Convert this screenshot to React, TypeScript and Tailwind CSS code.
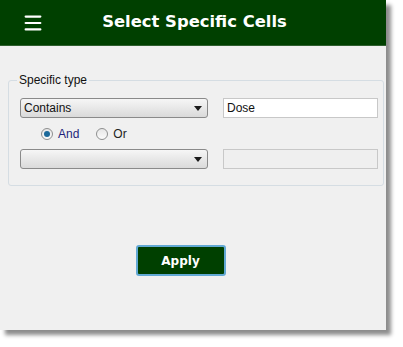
import { Menu } from 'lucide-react';

const Caret = () => (
  <svg width="8" height="5" viewBox="0 0 8 5" className="shrink-0">
    <path d="M0 0 H8 L4 5 Z" fill="#1a1a1a" />
  </svg>
);

const Select = ({ value = '' }: { value?: string }) => (
  <div className="flex h-[20px] w-[188px] items-center justify-between rounded-[3px] border border-[#8a8a8a] bg-gradient-to-b from-[#f6f6f6] to-[#dadada] pl-[3px] pr-[5px] text-[12px] text-[#111]">
    <span>{value}</span>
    <Caret />
  </div>
);

const Radio = ({ checked, label }: { checked?: boolean; label: string }) => (
  <label className="flex items-center gap-[5px]">
    <span className="flex h-[12px] w-[12px] items-center justify-center rounded-full border border-[#8e8f8f] bg-gradient-to-b from-[#e6e6e6] to-[#fbfbfb]">
      {checked && <span className="h-[6px] w-[6px] rounded-full bg-[#1d6a9b]" />}
    </span>
    <span className={checked ? 'text-[#1f1f7a]' : 'text-[#222]'}>{label}</span>
  </label>
);

export default function App() {
  return (
    <div className="h-[347px] w-[403px] bg-white" style={{ fontFamily: '"Liberation Sans", Arial, sans-serif' }}>
      <div className="flex h-[330px] w-[386px] flex-col bg-[#f0f0f0] shadow-[5px_5px_4px_rgba(0,0,0,0.45)]">
        <div className="grid h-[46px] grid-cols-[64px_1fr_64px] items-center border-b border-[#2f5f2f] bg-[#004000]">
          <div className="flex justify-end pr-[20px]">
            <Menu className="h-[22px] w-[22px] text-white" strokeWidth={2.4} />
          </div>
          <h1
            className="pl-[3px] text-center text-[16.4px] font-bold text-white"
            style={{ fontFamily: '"DejaVu Sans", Verdana, sans-serif' }}
          >
            Select Specific Cells
          </h1>
          <div />
        </div>

        <div className="pl-[8px] pr-[3px] pt-[25px]">
          <fieldset className="rounded-[3px] border border-[#d5dde3] pb-[16px] pl-[11px] pr-[5px] pt-[9px] text-[12px]">
            <legend className="ml-[-3px] px-[2px] text-[12px] text-[#111]">Specific type</legend>
            <div className="flex items-center gap-[15px]">
              <Select value="Contains" />
              <div className="flex h-[20px] w-[155px] items-center border border-[#c8c8c8] bg-white px-[3px] text-[#111]">
                Dose
              </div>
            </div>
            <div className="flex h-[31px] items-center gap-[17px] pl-[21px]">
              <Radio checked label="And" />
              <Radio label="Or" />
            </div>
            <div className="flex items-center gap-[15px]">
              <Select />
              <div className="h-[20px] w-[155px] border border-[#c8c8c8] bg-[#efefef]" />
            </div>
          </fieldset>

          <div className="flex justify-center pr-[30px] pt-[59px]">
            <button
              className="h-[31px] w-[90px] rounded-[3px] border-2 border-[#62a9d4] bg-[#004000] text-[12px] font-bold text-white"
              style={{ fontFamily: '"DejaVu Sans", Verdana, sans-serif' }}
            >
              Apply
            </button>
          </div>
        </div>
      </div>
    </div>
  );
}
